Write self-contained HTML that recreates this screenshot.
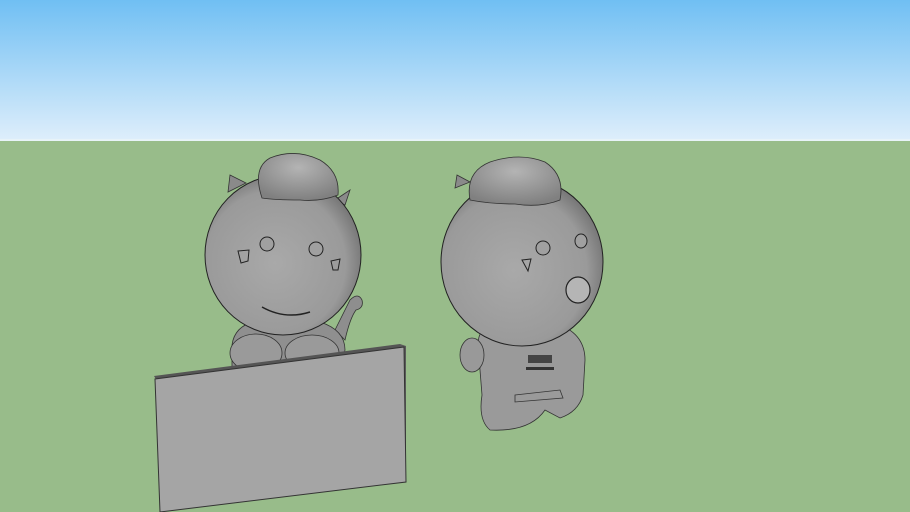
<!DOCTYPE html>
<html><head><meta charset="utf-8"><style>
html,body{margin:0;padding:0;width:910px;height:512px;overflow:hidden}
</style></head><body>
<svg width="910" height="512" viewBox="0 0 910 512" xmlns="http://www.w3.org/2000/svg">
<defs>
<linearGradient id="sky" x1="0" y1="0" x2="0" y2="1">
<stop offset="0" stop-color="#70bff3"/><stop offset="1" stop-color="#deeefb"/>
</linearGradient>
<radialGradient id="hd" cx="0.45" cy="0.55" r="0.6">
<stop offset="0" stop-color="#a9a9a9"/><stop offset="0.75" stop-color="#9a9a9a"/><stop offset="1" stop-color="#6e6e6e"/>
</radialGradient>
<radialGradient id="hr" cx="0.5" cy="0.3" r="0.7">
<stop offset="0" stop-color="#b4b4b4"/><stop offset="1" stop-color="#808080"/>
</radialGradient>
</defs>
<rect width="910" height="140" fill="url(#sky)"/>
<rect y="139" width="910" height="2" fill="#e8f3f8"/>
<rect y="141" width="910" height="371" fill="#98bc8a"/>

<!-- left character -->
<path d="M335 330 Q345 310 350 300 Q358 292 362 300 Q364 308 356 310 Q350 318 345 340 Z" fill="#8e8e8e" stroke="#333" stroke-width="0.8"/>
<path d="M232 345 Q235 322 265 320 L320 322 Q345 330 345 350 L340 372 L232 372 Z" fill="#8f8f8f" stroke="#333" stroke-width="0.8"/>
<ellipse cx="256" cy="353" rx="26" ry="19" fill="#9a9a9a" stroke="#333" stroke-width="0.8"/>
<ellipse cx="312" cy="353" rx="27" ry="18" fill="#9a9a9a" stroke="#333" stroke-width="0.8"/>
<path d="M228 192 L230 175 L246 183 Z" fill="#8a8a8a" stroke="#333" stroke-width="0.8"/>
<path d="M335 200 L350 190 L345 205 Z" fill="#8a8a8a" stroke="#333" stroke-width="0.8"/>
<ellipse cx="283" cy="255" rx="78" ry="80" fill="url(#hd)" stroke="#222" stroke-width="1"/>
<path d="M262 198 Q252 168 270 158 Q295 148 320 160 Q340 172 338 195 Q320 202 300 200 Q275 200 262 198 Z" fill="url(#hr)" stroke="#333" stroke-width="0.8"/>
<ellipse cx="267" cy="244" rx="7" ry="7" fill="#a0a0a0" stroke="#222" stroke-width="1"/>
<ellipse cx="316" cy="249" rx="7" ry="7" fill="#a0a0a0" stroke="#222" stroke-width="1"/>
<path d="M238 251 L249 250 L248 261 L241 263 Z" fill="none" stroke="#222" stroke-width="1"/>
<path d="M331 261 L340 259 L338 270 L333 270 Z" fill="none" stroke="#222" stroke-width="1"/>
<path d="M262 307 Q285 320 310 312" fill="none" stroke="#222" stroke-width="1.5"/>

<!-- board -->
<polygon points="154,376 400,344 404,348 157,381" fill="#555"/>
<polygon points="400,344 406,346 406,482 404,482" fill="#5a5a5a"/>
<polygon points="155,379 404,347 406,482 160,512" fill="#a5a5a5" stroke="#333" stroke-width="1"/>

<!-- right character -->
<path d="M478 345 Q478 322 505 323 L560 325 Q585 335 585 360 L583 395 Q578 412 560 418 L545 410 Q530 432 490 430 Q478 420 482 395 Z" fill="#9a9a9a" stroke="#333" stroke-width="0.8"/>
<ellipse cx="472" cy="355" rx="12" ry="17" fill="#999" stroke="#333" stroke-width="0.8"/>
<path d="M515 395 L560 390 L563 398 L515 402 Z" fill="none" stroke="#333" stroke-width="0.8"/>
<rect x="528" y="355" width="24" height="8" fill="#444"/>
<rect x="526" y="367" width="28" height="3" fill="#333"/>
<path d="M455 188 L457 175 L470 182 Z" fill="#8a8a8a" stroke="#333" stroke-width="0.8"/>
<ellipse cx="522" cy="262" rx="81" ry="84" fill="url(#hd)" stroke="#222" stroke-width="1"/>
<path d="M470 200 Q465 172 490 162 Q520 152 545 162 Q565 175 560 200 Q540 208 515 204 Q490 204 470 200 Z" fill="url(#hr)" stroke="#333" stroke-width="0.8"/>
<ellipse cx="543" cy="248" rx="7" ry="7" fill="#a0a0a0" stroke="#222" stroke-width="1"/>
<ellipse cx="581" cy="241" rx="6" ry="7" fill="#a0a0a0" stroke="#222" stroke-width="1"/>
<path d="M522 260 L531 259 L528 271 Z" fill="none" stroke="#222" stroke-width="1"/>
<ellipse cx="578" cy="290" rx="12" ry="13" fill="#b5b5b5" stroke="#222" stroke-width="1.2"/>
</svg>
</body></html>
